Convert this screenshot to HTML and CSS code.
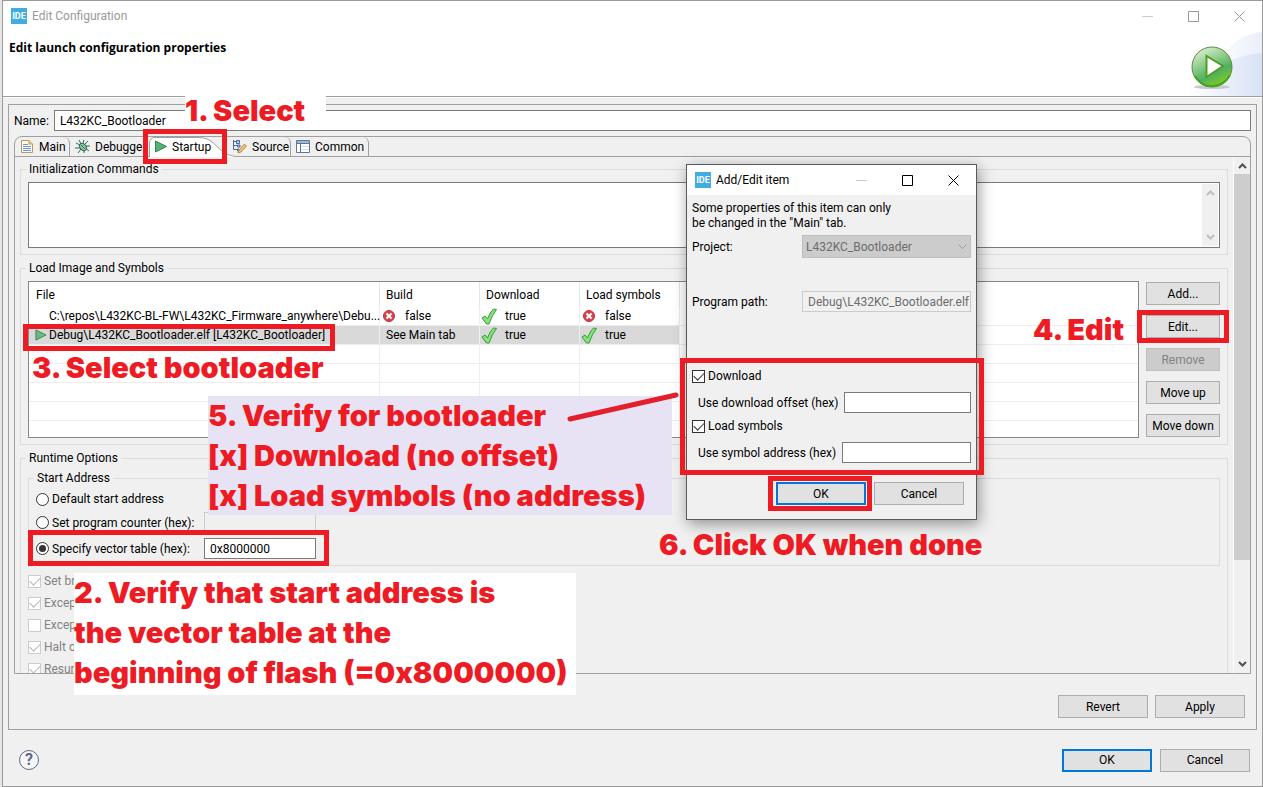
FILE: index.html
```html
<!DOCTYPE html>
<html lang="en">
  <head>
    <meta charset="UTF-8" />
    <title>Edit Configuration</title>
    <link rel="stylesheet" href="styles.css">
  </head>
  <body>
    <div class="window">
      <!-- Title bar of the main window -->
      <div class="titlebar">
        <span class="ide">IDE</span>
        <span class="title">Edit Configuration</span>
        <button class="winbtn faint" aria-label="Minimize"><svg width="11" height="11"><path d="M0 5.5H11" /></svg></button>
        <button class="winbtn" aria-label="Maximize"><svg width="11" height="11"><path d="M.5 .5H10.5V10.5H.5Z" /></svg></button>
        <button class="winbtn" aria-label="Close"><svg width="11" height="11"><path d="M.5 .5L10.5 10.5M10.5 .5L.5 10.5" /></svg></button>
      </div>
      <div class="header">
        <h1>Edit launch configuration properties</h1>
        <!-- Run picture -->
        <svg class="banner" width="110" height="65" viewBox="0 0 110 65">
          <defs>
            <linearGradient id="sky" x1="0" x2="1"><stop offset="0" stop-color="#fff" /><stop offset="1" stop-color="#d8e2f5" /></linearGradient>
            <linearGradient id="sky2" x1="0" x2="1"><stop offset="0" stop-color="#fafbfe" /><stop offset="1" stop-color="#e9effa" /></linearGradient>
            <linearGradient id="ball" x1="0" y1="0" x2=".5" y2="1"><stop offset="0" stop-color="#f2f9ee" /><stop offset=".45" stop-color="#93cf8c" /><stop offset=".75" stop-color="#4fb060" /><stop offset="1" stop-color="#7cc928" /></linearGradient>
          </defs>
          <path d="M72 22Q88 2 110 1V40H72Z" fill="url(#sky2)" />
          <path d="M35 65Q62 26 110 22V65Z" fill="url(#sky)" />
          <ellipse cx="60" cy="56" rx="18" ry="2" fill="#c9c9c9" />
          <circle cx="60" cy="36" r="20" fill="url(#ball)" stroke="#5c8a43" />
          <path d="M43 45Q50 56 60 55Q72 55 78 44" fill="none" stroke="#46a524" stroke-width="2" />
          <path d="M54.500 25V46L71 35Z" fill="#fff" stroke="#4f9e22" stroke-width="2" />
        </svg>
      </div>

      <div class="content">
        <div class="group">
          <div class="name-row">
            <label for="name">Name:</label>
            <input type="text" id="name" value="L432KC_Bootloader" />
          </div>

          <div class="folder">
            <div class="tabs">
              <button class="tab main">
                <svg width="14" height="15" viewBox="0 0 14 15"><path d="M1.500 1.500H9L12.500 5V13.500H1.500Z" fill="#fdfaf0" stroke="#b39a5c" /><path d="M9 1.500V5H12.500" fill="#e9d39b" stroke="#b39a5c" /><path d="M3 5.500H8M3 7.500H11M3 9.500H11M3 11.500H11" stroke="#6f95c9" /></svg>
                Main
              </button>
              <button class="tab debugger">
                <svg width="15" height="15" viewBox="0 0 15 15"><path d="M4 1L6 5M9 1L8 4M1 4L5 6M0 9H5M3 14L6 10M9 14V10M14 12L10 9M15 7H10M13 2L10 5" fill="none" stroke="#2e6b58" /><ellipse cx="8" cy="8" rx="3" ry="4" transform="rotate(-40 8 8)" fill="#8fc79a" stroke="#2e6b58" /><path d="M6 6L10 10" stroke="#2e6b58" /></svg>
                Debugger
              </button>
              <button class="tab startup">
                <svg class="curve" width="90" height="20" viewBox="0 0 90 20"><path d="M0 20V6Q1 .5 6 .5H50C68 .5 68 19.500 90 19.500V20Z" fill="#fff" /><path d="M.5 20V6Q1 .5 6 .5H50C68 .5 68 19.500 90 19.500" fill="none" stroke="#a0a0a0" /></svg>
                <svg width="12" height="13" viewBox="0 0 12 13"><path d="M.5 1L11.500 6.500L.5 12Z" fill="#56b270" stroke="#2c8a4a" /></svg>
                Startup
              </button>
              <button class="tab source">
                <svg width="15" height="15" viewBox="0 0 15 15"><path d="M1.500 1V10.500H5M1.500 6.500H5M1.500 2.500H4" fill="none" stroke="#44699e" /><path d="M4.500 1.500H7.500V4.500H4.500ZM5.500 6H8V8H5.500ZM5.500 10H7V12H5.500Z" fill="#b9cde8" stroke="#44699e" /><path d="M6 14L7 11L12.500 5L14.500 7L9 13Z" fill="#f2c078" stroke="#bf8a4a" /></svg>
                Source
              </button>
              <button class="tab common">
                <svg width="14" height="13" viewBox="0 0 14 13"><path d="M.5 .5H13.500V12.500H.5Z" fill="#fff" stroke="#5d7796" /><path d="M1 1H13V3H1Z" fill="#9db8d6" /><path d="M1 3.500H13M4.500 3V12" stroke="#5d7796" /><path d="M5 6.500H13M5 9.500H13" stroke="#cfdbe8" /></svg>
                Common
              </button>
            </div>

            <div class="pane">
              <div class="page">
                <fieldset>
                  <legend>Initialization Commands</legend>
                  <div class="commands">
                    <textarea aria-label="Initialization Commands"></textarea>
                    <div class="scroll small">
                      <svg width="9" height="6"><path d="M1 5L4.500 1.500L8 5" /></svg>
                      <svg width="9" height="6"><path d="M1 1L4.500 4.500L8 1" /></svg>
                    </div>
                  </div>
                </fieldset>

                <fieldset>
                  <legend>Load Image and Symbols</legend>
                  <div class="images">
                    <div class="table-box">
                      <table>
                        <colgroup><col class="c-file"><col class="c-flag"><col class="c-flag"><col class="c-flag"><col></colgroup>
                        <thead>
                          <tr><th>File</th><th>Build</th><th>Download</th><th>Load symbols</th><th></th></tr>
                        </thead>
                        <tbody>
                          <tr>
                            <td><div class="cell"><span class="ico"></span>C:\repos\L432KC-BL-FW\L432KC_Firmware_anywhere\Debu...</div></td>
                            <td><div class="cell flag"><svg class="bad" width="12" height="12"><use href="#bad" /></svg>false</div></td>
                            <td><div class="cell flag"><svg width="16" height="17"><use href="#good" /></svg>true</div></td>
                            <td><div class="cell flag"><svg class="bad" width="12" height="12"><use href="#bad" /></svg>false</div></td>
                            <td></td>
                          </tr>
                          <tr class="selected">
                            <td><div class="cell"><span class="ico"><svg width="12" height="12" viewBox="0 0 12 13"><path d="M.5 1L11.500 6.500L.5 12Z" fill="#6fb886" stroke="#2c8a4a" /></svg></span>Debug\L432KC_Bootloader.elf [L432KC_Bootloader]</div></td>
                            <td><div class="cell text">See Main tab</div></td>
                            <td><div class="cell flag"><svg width="16" height="17"><use href="#good" /></svg>true</div></td>
                            <td><div class="cell flag"><svg width="16" height="17"><use href="#good" /></svg>true</div></td>
                            <td></td>
                          </tr>
                          <tr><td></td><td></td><td></td><td></td><td></td></tr>
                          <tr><td></td><td></td><td></td><td></td><td></td></tr>
                          <tr><td></td><td></td><td></td><td></td><td></td></tr>
                          <tr><td></td><td></td><td></td><td></td><td></td></tr>
                        </tbody>
                      </table>
                    </div>
                    <div class="side">
                      <button class="btn">Add...</button>
                      <button class="btn marked">Edit...</button>
                      <button class="btn" disabled>Remove</button>
                      <button class="btn">Move up</button>
                      <button class="btn">Move down</button>
                    </div>
                  </div>
                </fieldset>

                <fieldset class="runtime">
                  <legend>Runtime Options</legend>
                  <fieldset class="address">
                    <legend>Start Address</legend>
                    <div class="opt first"><label><input type="radio" name="start" />Default start address</label></div>
                    <div class="opt"><label><input type="radio" name="start" />Set program counter (hex):</label><input type="text" aria-label="Program counter" disabled /></div>
                    <div class="opt"><label><input type="radio" name="start" checked />Specify vector table (hex):</label><input type="text" aria-label="Vector table" value="0x8000000" /></div>
                  </fieldset>
                  <div class="checks">
                    <label><input type="checkbox" checked disabled />Set br</label>
                    <label><input type="checkbox" checked disabled />Excep</label>
                    <label><input type="checkbox" disabled />Excep</label>
                    <label><input type="checkbox" checked disabled />Halt o</label>
                    <label><input type="checkbox" checked disabled />Resur</label>
                  </div>
                </fieldset>
              </div>
              <div class="scroll">
                <svg width="9" height="6"><path d="M1 5L4.500 1.500L8 5" /></svg>
                <div class="track"><div class="thumb"></div></div>
                <svg width="9" height="6"><path d="M1 1L4.500 4.500L8 1" /></svg>
              </div>
            </div>
          </div>

          <div class="row-buttons">
            <button class="btn wide">Revert</button>
            <button class="btn wide">Apply</button>
          </div>
        </div>
      </div>

      <div class="footer">
        <button class="help" aria-label="Help">?</button>
        <button class="btn wide default">OK</button>
        <button class="btn wide">Cancel</button>
      </div>
    </div>

    <!-- Small dialog over the main window -->
    <div class="dialog">
      <div class="titlebar">
        <span class="ide">IDE</span>
        <span class="title">Add/Edit item</span>
        <button class="winbtn faint" aria-label="Minimize"><svg width="11" height="11"><path d="M0 5.500H11" /></svg></button>
        <button class="winbtn" aria-label="Maximize"><svg width="11" height="11"><path d="M.5 .5H10.500V10.500H.5Z" /></svg></button>
        <button class="winbtn" aria-label="Close"><svg width="11" height="11"><path d="M.5 .5L10.500 10.500M10.500 .5L.5 10.500" /></svg></button>
      </div>
      <div class="form">
        <p>Some properties of this item can only<br />be changed in the "Main" tab.</p>
        <div class="field project">
          <label for="project">Project:</label>
          <div class="drop">
            <select id="project" disabled><option>L432KC_Bootloader</option></select>
            <svg width="9" height="6"><path d="M.5 .5L4.500 4.500L8.500 .5" /></svg>
          </div>
        </div>
        <div class="field path">
          <label for="path">Program path:</label>
          <input type="text" id="path" value="Debug\L432KC_Bootloader.elf" disabled />
        </div>
        <div class="hexes">
          <label class="check"><input type="checkbox" checked />Download</label>
          <div class="hex"><label for="offset">Use download offset (hex)</label><input type="text" id="offset" /></div>
          <label class="check"><input type="checkbox" checked />Load symbols</label>
          <div class="hex"><label for="symaddr">Use symbol address (hex)</label><input type="text" id="symaddr" /></div>
        </div>
        <div class="dialog-buttons">
          <button class="btn wide default marked">OK</button>
          <button class="btn wide">Cancel</button>
        </div>
      </div>
    </div>

    <!-- Red notes drawn on top of everything -->
    <div class="box box-tab"></div>
    <div class="box box-row"></div>
    <div class="box box-vector"></div>
    <div class="note n1">1. Select</div>
    <div class="note n2">2. Verify that start address is<br />the vector table at the<br />beginning of flash (=0x8000000)</div>
    <div class="note n3">3. Select bootloader</div>
    <div class="note n4">4. Edit</div>
    <div class="note n5">5. Verify for bootloader<br />[x] Download (no offset)<br />[x] Load symbols (no address)</div>
    <div class="note n6">6. Click OK when done</div>
    <svg class="pointer" width="116" height="34"><path d="M5 29L111 5" /></svg>

    <!-- Shared table icons -->
    <svg class="defs" width="0" height="0">
      <symbol id="bad" viewBox="0 0 12 12"><circle cx="6" cy="6" r="5.500" fill="#d9434e" stroke="#c2303c" /><path d="M3.500 3.500L8.500 8.500M8.500 3.500L3.500 8.500" stroke="#fff" stroke-width="2" /></symbol>
      <symbol id="good" viewBox="0 0 16 17"><path d="M1 10L4 8L6.500 11Q9 4 12.500 1L15.500 1.500Q11 7 8 16H5.500Z" fill="#8be07d" stroke="#2f9e3c" /></symbol>
    </svg>
  </body>
</html>
```

FILE: styles.css
```css
* {
  box-sizing: border-box;
}
body {
  margin: 0;
  height: 100vh;
  padding-left: 2px;
  overflow: hidden;
  background: #e6e6e6;
  color: #000;
  font-family: Roboto, "Open Sans", sans-serif;
  font-size: 12px;
  line-height: 16px;
}
button,
input,
select,
textarea {
  font: inherit;
  color: inherit;
  margin: 0;
  border-radius: 0;
}
svg {
  display: block;
  flex: none;
}

/* main window */
.window {
  display: flex;
  flex-direction: column;
  height: 100%;
  border: 1px solid #9a9a9a;
  background: #f0f0f0;
}
.titlebar {
  display: flex;
  align-items: center;
  height: 30px;
  padding-left: 8px;
  background: #fff;
}
.ide {
  width: 16px;
  height: 16px;
  margin-right: 5px;
  background: #3fade0;
  color: #fff;
  font-size: 9px;
  font-weight: bold;
  text-align: center;
}
.title {
  flex: 1;
}
.window > .titlebar {
  color: #999;
}
.winbtn {
  display: flex;
  align-items: center;
  justify-content: center;
  width: 46px;
  height: 30px;
  padding: 0;
  border: 0;
  background: none;
}
.winbtn path {
  fill: none;
  stroke: currentColor;
}
.faint {
  color: #ccc;
}
.header {
  display: flex;
  justify-content: space-between;
  height: 66px;
  background: #fff;
  border-bottom: 1px solid #a0a0a0;
}
h1 {
  margin: 9px 6px;
  font-family: "Open Sans", sans-serif;
  font-size: 12px;
  line-height: 16px;
}

.content {
  flex: 1;
  min-height: 0;
  padding: 6px 5px 0;
  border-top: 1px solid #fff;
}
.group {
  display: flex;
  flex-direction: column;
  height: 100%;
  padding: 5px;
  border: 1px solid #a0a0a0;
}
.name-row {
  display: flex;
  align-items: center;
  gap: 5px;
}
.name-row input {
  flex: 1;
}
input[type="text"] {
  height: 21px;
  min-width: 0;
  padding: 0 0 0 5px;
  border: 1px solid #7a7a7a;
  background: #fff;
  outline: none;
}
input[type="text"]:disabled {
  border-color: #ccc;
  background: #f0f0f0;
  color: #6d6d6d;
}

/* tabs */
.folder {
  display: flex;
  flex-direction: column;
  flex: 1;
  min-height: 0;
  margin-top: 5px;
  border: 1px solid #a0a0a0;
  border-radius: 8px 8px 0 0;
}
.tabs {
  display: flex;
  height: 20px;
  border-bottom: 1px solid #a0a0a0;
}
.tab {
  position: relative;
  display: flex;
  align-items: center;
  gap: 5px;
  height: 19px;
  padding: 0 4px 0 5px;
  border: 0;
  border-right: 1px solid #a0a0a0;
  border-radius: 0 6px 0 0;
  background: none;
  white-space: nowrap;
}
.tab.main {
  width: 55px;
}
.tab.debugger {
  width: 79px;
  border-right: 0;
}
.tab.startup {
  z-index: 1;
  width: 78px;
  padding-left: 6px;
  border-right: 0;
}
.tab.startup .curve {
  position: absolute;
  left: 0;
  top: 0;
  z-index: -1;
}
.tab.source {
  width: 64px;
}

.pane {
  display: flex;
  flex: 1;
  min-height: 0;
}
.page {
  flex: 1;
  min-width: 0;
  overflow: hidden;
  padding: 4px 5px 0;
}
.scroll {
  display: flex;
  flex-direction: column;
  align-items: center;
  width: 17px;
  padding: 6px 0;
  border-left: 1px solid #fff;
}
.scroll path {
  fill: none;
  stroke: #505050;
  stroke-width: 2;
}
.track {
  flex: 1;
  width: 100%;
  margin: 5px 0;
}
.thumb {
  height: 80%;
  background: #cdcdcd;
}
.scroll.small {
  width: 16px;
  margin: 1px;
  justify-content: space-between;
  border: 0;
  background: #f0f0f0;
}
.scroll.small path {
  stroke: #bfbfbf;
}

fieldset {
  min-width: 0;
  margin: 0 0 5px;
  padding: 5px 7px 6px;
  border: 1px solid #dcdcdc;
}
legend {
  margin-left: -2px;
  padding: 0 3px;
}
.commands {
  display: flex;
  height: 66px;
  border: 1px solid #7a7a7a;
  background: #fff;
}
textarea {
  flex: 1;
  border: 0;
  outline: none;
  resize: none;
}
.images {
  display: flex;
  gap: 7px;
}
.table-box {
  flex: 1;
  min-width: 0;
  height: 157px;
  border: 1px solid #828790;
  background: #fff;
}
table {
  width: 100%;
  table-layout: fixed;
  border-collapse: separate;
  border-spacing: 0;
}
.c-file {
  width: 351px;
}
.c-flag {
  width: 100px;
}
th {
  height: 25px;
  padding: 0 0 0 6px;
  border-right: 1px solid #e5e5e5;
  font-weight: normal;
  text-align: left;
}
th:first-child {
  padding-left: 7px;
}
td {
  height: 19px;
  padding: 0;
  border-right: 1px solid #ededf2;
  border-bottom: 1px solid #ededed;
}
th:last-child,
td:last-child {
  border-right: 0;
}
.selected td:not(:last-child) {
  background: #d9d9d9;
}
.cell {
  display: flex;
  align-items: center;
  height: 18px;
  padding-left: 6px;
  white-space: nowrap;
}
.ico {
  flex: none;
  width: 14px;
}
.cell.flag {
  gap: 8px;
  padding-left: 1px;
}
.flag .bad {
  margin: 0 2px;
}
.side {
  display: flex;
  flex-direction: column;
  gap: 10px;
  padding-top: 1px;
}

.btn {
  position: relative;
  width: 74px;
  height: 23px;
  padding: 0;
  border: 1px solid #adadad;
  background: #e1e1e1;
  white-space: nowrap;
}
.btn:disabled {
  border-color: #bfbfbf;
  background: #ccc;
  color: #838383;
}
.btn.wide {
  width: 90px;
}
.default {
  border: 2px solid #0078d7;
}

.runtime {
  padding-top: 4px;
}
.address {
  margin: 0;
}
.opt {
  display: flex;
  align-items: center;
  height: 21px;
  margin-bottom: 5px;
}
.opt.first {
  height: 16px;
}
.opt:last-child {
  margin-bottom: 0;
}
.opt label {
  width: 168px;
}
.opt input[type="text"] {
  width: 112px;
}
.opt label,
.checks label,
.check {
  display: flex;
  align-items: center;
  gap: 3px;
  white-space: nowrap;
}
input[type="radio"],
input[type="checkbox"] {
  appearance: none;
  display: grid;
  place-items: center;
  width: 13px;
  height: 13px;
  flex: none;
  border: 1px solid #333;
  background: #fff;
}
input[type="radio"] {
  border-radius: 50%;
}
input[type="radio"]:checked::after {
  content: "";
  width: 7px;
  height: 7px;
  border-radius: 50%;
  background: #333;
}
input[type="checkbox"]:checked::after {
  content: "";
  width: 9px;
  height: 5px;
  margin-bottom: 3px;
  border: solid #333;
  border-width: 0 0 1px 1px;
  transform: rotate(-45deg);
}
input[type="checkbox"]:disabled {
  border-color: #ccc;
}
input[type="checkbox"]:disabled::after {
  border-color: #b5b5b5;
}
.checks {
  display: flex;
  flex-direction: column;
  gap: 6px;
  margin-top: 7px;
  color: #838383;
}

.row-buttons {
  display: flex;
  justify-content: flex-end;
  gap: 7px;
  padding: 21px 6px 6px 0;
}
.footer {
  display: flex;
  align-items: center;
  gap: 8px;
  height: 56px;
  padding: 4px 12px 0 16px;
}
.help {
  width: 20px;
  height: 20px;
  margin-right: auto;
  padding: 0;
  border: 1px solid #5f6b85;
  border-radius: 50%;
  background: #f6f7fa;
  color: #5f6b85;
  font-size: 16px;
  font-weight: bold;
  line-height: 16px;
}

/* dialog */
.dialog {
  position: absolute;
  left: 686px;
  top: 164px;
  z-index: 2;
  width: 291px;
  border: 1px solid #5a5a5a;
  background: #f0f0f0;
  box-shadow: 2px 4px 14px rgba(0, 0, 0, 0.4);
}
.form {
  padding: 6px 5px 14px;
}
.form p {
  margin: 0;
  line-height: 15px;
}
.field {
  display: flex;
  align-items: center;
  justify-content: space-between;
}
.project {
  margin-top: 4px;
}
.path {
  margin-top: 33px;
}
.field input,
.drop {
  width: 169px;
}
.drop {
  position: relative;
}
.drop select {
  appearance: none;
  display: block;
  width: 100%;
  height: 23px;
  padding: 0 3px;
  border: 1px solid #bfbfbf;
  background: #ccc;
  color: #6d6d6d;
  opacity: 1;
}
.drop svg {
  position: absolute;
  right: 4px;
  top: 9px;
}
.drop path {
  fill: none;
  stroke: #999;
}
.hexes {
  position: relative;
  display: flex;
  flex-direction: column;
  margin-top: 56px;
}
.hex {
  display: flex;
  align-items: center;
  gap: 6px;
  margin: 8px 0 5px;
  padding-left: 6px;
  white-space: nowrap;
}
.hex input {
  flex: 1;
}
.dialog-buttons {
  display: flex;
  justify-content: flex-end;
  gap: 8px;
  margin-top: 14px;
  padding-right: 7px;
}

/* notes */
.box,
.marked::after,
.hexes::after {
  position: absolute;
  z-index: 2;
  border: 5px solid #ed1c24;
  pointer-events: none;
}
.marked::after,
.hexes::after {
  content: "";
}
.side .marked::after {
  inset: -6px -10px;
}
.dialog .marked::after {
  inset: -8px -8px -8px -10px;
}
.hexes::after {
  inset: -10px -13px -7px -12px;
}
.box-tab {
  left: 143px;
  top: 129px;
  width: 84px;
  height: 35px;
}
.box-row {
  left: 23px;
  top: 324px;
  width: 312px;
  height: 27px;
}
.box-vector {
  left: 28px;
  top: 530px;
  width: 301px;
  height: 36px;
}
.note {
  position: absolute;
  z-index: 2;
  color: #ed1c24;
  font-family: Inter, sans-serif;
  font-size: 29px;
  font-weight: 900;
  line-height: 40px;
  white-space: nowrap;
}
.n1 {
  left: 185px;
  top: 96px;
  width: 141px;
  height: 33px;
  background: #fff;
  line-height: 30px;
}
.n2 {
  left: 74px;
  top: 573px;
  width: 502px;
  height: 122px;
  background: #fff;
}
.n3 {
  left: 32px;
  top: 348px;
}
.n4 {
  right: 139px;
  top: 310px;
}
.n5 {
  left: 208px;
  top: 396px;
  width: 464px;
  height: 119px;
  background: #e7e3f4;
}
.n6 {
  left: 659px;
  top: 525px;
}
.pointer {
  position: absolute;
  left: 565px;
  top: 390px;
  z-index: 2;
}
.pointer path {
  stroke: #e21f2b;
  stroke-width: 5;
  stroke-linecap: round;
}
.defs {
  position: absolute;
}
```
